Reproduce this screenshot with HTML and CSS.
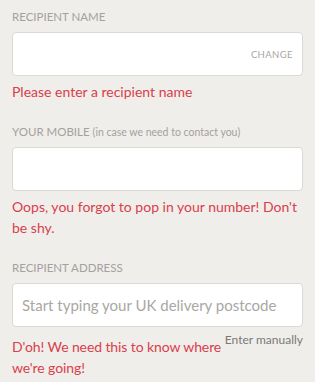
FILE: index.html
```html
<!DOCTYPE html>
<html>
<head>
<meta charset="utf-8">
<link rel="stylesheet" href="styles.css">
</head>
<body>
<div class="form">
  <div class="field">
    <div class="label">RECIPIENT NAME</div>
    <div class="input"><span class="change">CHANGE</span></div>
    <div class="error">Please enter a recipient name</div>
  </div>
  <div class="field">
    <div class="label">YOUR MOBILE <span class="hint">(in case we need to contact you)</span></div>
    <div class="input"></div>
    <div class="error">Oops, you forgot to pop in your number! Don't be shy.</div>
  </div>
  <div class="field">
    <div class="label">RECIPIENT ADDRESS</div>
    <div class="input"><span class="placeholder">Start typing your UK delivery postcode</span></div>
    <div class="row">
      <div class="error narrow">D'oh! We need this to know where we're going!</div>
      <div class="manual">Enter manually</div>
    </div>
  </div>
</div>
</body>
</html>
```
FILE: styles.css
```css
html, body {
  margin: 0;
  padding: 0;
  background: #f0eeeb;
}
body {
  font-family: Lato, "Open Sans", sans-serif;
  width: 315px;
  height: 382px;
  overflow: hidden;
}
.form {
  padding: 8px 12px 0 12px;
  display: flex;
  flex-direction: column;
  gap: 21px;
}
.label {
  font-size: 11.5px;
  line-height: 18px;
  color: #a4a19e;
  margin-bottom: 6px;
}
.hint {
  font-size: 10.5px;
}
.input {
  height: 42px;
  background: #fff;
  border: 1px solid #dcd9d5;
  border-radius: 4px;
  display: flex;
  align-items: center;
  padding: 0 9px;
  box-sizing: content-box;
}
.change {
  margin-left: auto;
  font-size: 9.5px;
  color: #a8a6a3;
  letter-spacing: 0.4px;
}
.placeholder {
  font-size: 15px;
  color: #a9a7a4;
}
.error {
  margin-top: 5px;
  font-size: 14px;
  line-height: 21px;
  color: #d8404a;
}
.row {
  display: flex;
  justify-content: space-between;
  align-items: flex-start;
}
.narrow {
  flex: 0 0 212px;
  margin-top: 9px;
  letter-spacing: -0.1px;
}
.manual {
  margin-top: 4px;
  font-size: 12px;
  color: #7b7976;
  line-height: 18px;
  white-space: nowrap;
}
```
